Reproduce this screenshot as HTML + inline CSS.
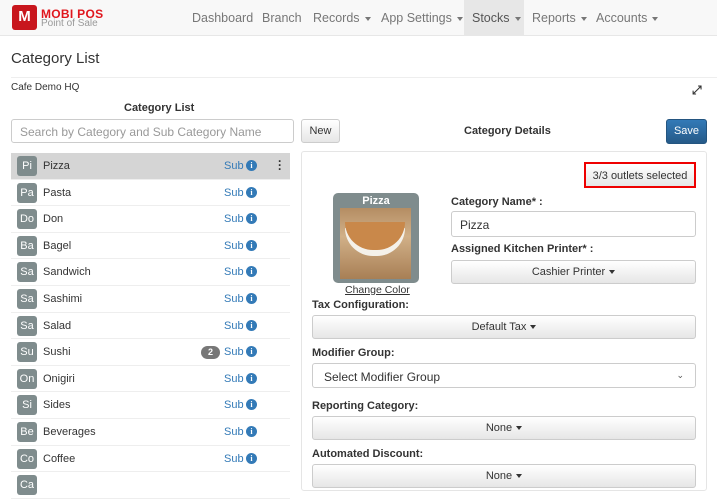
<!DOCTYPE html><html><head><style>
*{box-sizing:border-box}body{margin:0;width:717px;height:477px;overflow:hidden;font-family:"Liberation Sans",sans-serif;color:#333;background:#fff;font-size:11px}
.nav{position:absolute;left:0;top:0;width:717px;height:36px;background:#f8f8f8;border-bottom:1px solid #e7e7e7}
.nav a{position:absolute;top:11px;font-size:12.5px;color:#777}
.logo{position:absolute;left:12px;top:5px;width:25px;height:25px;background:#c8161d;border-radius:3px;color:#fff;font-weight:bold;font-size:15px;text-align:center;line-height:23px}
.cr::after{content:"";display:inline-block;margin-left:5px;border-top:4px solid #777;border-left:3px solid transparent;border-right:3px solid transparent;vertical-align:middle}
.abs{position:absolute}
.row{position:absolute;left:11px;width:279px;height:26.6px;border-bottom:1px solid #eee}
.row .b{position:absolute;left:6px;top:3px;width:20px;height:20px;background:#7f8c8d;border-radius:3px;color:#fff;text-align:center;line-height:20px;font-size:11px}
.row .n{position:absolute;left:32px;top:7px;font-size:11px}
.row .s{position:absolute;left:213px;top:7px;color:#337ab7;font-size:11px}
.row .i{position:absolute;left:235px;top:7px;width:11px;height:11px;border-radius:50%;background:#337ab7;color:#fff;font-size:8px;text-align:center;line-height:11px;font-weight:bold;font-family:"Liberation Serif",serif}
.btn{position:absolute;border:1px solid #ccc;border-radius:3px;background:linear-gradient(#fff,#e6e6e6);text-align:center;font-size:11px;color:#333}
.lbl{position:absolute;font-weight:bold;font-size:11px}
.car::after{content:"";display:inline-block;margin-left:4px;border-top:4px solid #333;border-left:3px solid transparent;border-right:3px solid transparent;vertical-align:middle}
</style></head><body>
<div class="nav">
<div class="logo">M</div>
<div class="abs" style="left:41px;top:7px;color:#e0161d;font-size:12px;font-weight:bold;letter-spacing:.3px">MOBI POS</div>
<div class="abs" style="left:41px;top:18px;color:#999;font-size:10px">Point of Sale</div>
<a style="left:192px">Dashboard</a><a style="left:262px">Branch</a><a class="cr" style="left:313px">Records</a><a class="cr" style="left:381px">App Settings</a>
<div class="abs" style="left:464px;top:0;width:60px;height:36px;background:#e7e7e7"></div>
<a class="cr" style="left:472px;color:#555">Stocks</a><a class="cr" style="left:532px">Reports</a><a class="cr" style="left:596px">Accounts</a>
</div>
<div class="abs" style="left:11px;top:50px;font-size:15px">Category List</div>
<div class="abs" style="left:11px;top:77px;width:706px;border-top:1px solid #eee"></div>
<div class="abs" style="left:11px;top:82px;font-size:10px">Cafe Demo HQ</div>
<div class="abs" style="left:692px;top:83px;font-size:12px;font-weight:bold">⤢</div>
<div class="lbl" style="left:124px;top:102px">Category List</div>
<div class="abs" style="left:11px;top:119px;width:283px;height:24px;border:1px solid #ccc;border-radius:3px;padding:5px 8px;color:#999;font-size:12px">Search by Category and Sub Category Name</div>
<div class="btn" style="left:301px;top:119px;width:39px;height:24px;line-height:22px">New</div>
<div class="lbl" style="left:464px;top:125px">Category Details</div>
<div class="btn" style="left:666px;top:119px;width:41px;height:25px;line-height:23px;background:linear-gradient(#337ab7,#265a88);border-color:#245580;color:#fff">Save</div>
<div class="abs" style="left:11px;top:153px;width:279px;height:26px;background:#d5d5d5"></div>
<div class="abs" style="left:278px;top:159px;font-weight:bold;font-size:12px;line-height:4px">·<br>·<br>·</div>
<div class="row" style="top:153px"><div class="b">Pi</div><div class="n">Pizza</div><div class="s">Sub</div><div class="i">i</div></div>
<div class="row" style="top:179.6px"><div class="b">Pa</div><div class="n">Pasta</div><div class="s">Sub</div><div class="i">i</div></div>
<div class="row" style="top:206.2px"><div class="b">Do</div><div class="n">Don</div><div class="s">Sub</div><div class="i">i</div></div>
<div class="row" style="top:232.8px"><div class="b">Ba</div><div class="n">Bagel</div><div class="s">Sub</div><div class="i">i</div></div>
<div class="row" style="top:259.4px"><div class="b">Sa</div><div class="n">Sandwich</div><div class="s">Sub</div><div class="i">i</div></div>
<div class="row" style="top:286px"><div class="b">Sa</div><div class="n">Sashimi</div><div class="s">Sub</div><div class="i">i</div></div>
<div class="row" style="top:312.6px"><div class="b">Sa</div><div class="n">Salad</div><div class="s">Sub</div><div class="i">i</div></div>
<div class="row" style="top:339.2px"><div class="b">Su</div><div class="n">Sushi</div><div class="abs" style="left:190px;top:7px;width:19px;height:13px;border-radius:7px;background:#777;color:#fff;font-size:9px;font-weight:bold;text-align:center;line-height:13px">2</div><div class="s">Sub</div><div class="i">i</div></div>
<div class="row" style="top:365.8px"><div class="b">On</div><div class="n">Onigiri</div><div class="s">Sub</div><div class="i">i</div></div>
<div class="row" style="top:392.4px"><div class="b">Si</div><div class="n">Sides</div><div class="s">Sub</div><div class="i">i</div></div>
<div class="row" style="top:419px"><div class="b">Be</div><div class="n">Beverages</div><div class="s">Sub</div><div class="i">i</div></div>
<div class="row" style="top:445.6px"><div class="b">Co</div><div class="n">Coffee</div><div class="s">Sub</div><div class="i">i</div></div>
<div class="row" style="top:472.2px"><div class="b">Ca</div></div>
<div class="abs" style="left:301px;top:151px;width:406px;height:340px;border:1px solid #e5e5e5;border-radius:3px"></div>
<div class="btn" style="left:584px;top:162px;width:112px;height:26px;line-height:24px;border:2px solid #e00;border-radius:0">3/3 outlets selected</div>
<div class="abs" style="left:333px;top:193px;width:86px;height:90px;background:#7f8c8d;border-radius:5px"><div style="color:#fff;font-weight:bold;text-align:center;font-size:11px;margin-top:2px">Pizza</div>
<div style="position:absolute;left:7px;top:15px;width:71px;height:71px;background:linear-gradient(#b48d63,#d1b088 40%,#a87f55)"><div style="position:absolute;left:5px;top:14px;width:60px;height:28px;background:#c9884a;border-radius:0 0 30px 30px;box-shadow:0 6px 0 #f4f1ea"></div></div></div>
<div class="abs" style="left:345px;top:284px;text-decoration:underline;font-size:10.5px">Change Color</div>
<div class="lbl" style="left:451px;top:196px">Category Name* :</div>
<div class="abs" style="left:451px;top:211px;width:245px;height:26px;border:1px solid #ccc;border-radius:3px;padding:6px 8px;font-size:12px">Pizza</div>
<div class="lbl" style="left:451px;top:243px">Assigned Kitchen Printer* :</div>
<div class="btn car" style="left:451px;top:260px;width:245px;height:24px;line-height:22px">Cashier Printer</div>
<div class="lbl" style="left:312px;top:299px">Tax Configuration:</div>
<div class="btn car" style="left:312px;top:315px;width:384px;height:24px;line-height:22px">Default Tax</div>
<div class="lbl" style="left:312px;top:347px">Modifier Group:</div>
<div class="abs" style="left:312px;top:363px;width:384px;height:25px;border:1px solid #ccc;border-radius:3px;padding:6px 11px;font-size:12px">Select Modifier Group<span style="float:right;font-size:9px;color:#555">⌄</span></div>
<div class="lbl" style="left:312px;top:400px">Reporting Category:</div>
<div class="btn car" style="left:312px;top:416px;width:384px;height:24px;line-height:22px">None</div>
<div class="lbl" style="left:312px;top:448px">Automated Discount:</div>
<div class="btn car" style="left:312px;top:464px;width:384px;height:24px;line-height:22px">None</div>
</body></html>
